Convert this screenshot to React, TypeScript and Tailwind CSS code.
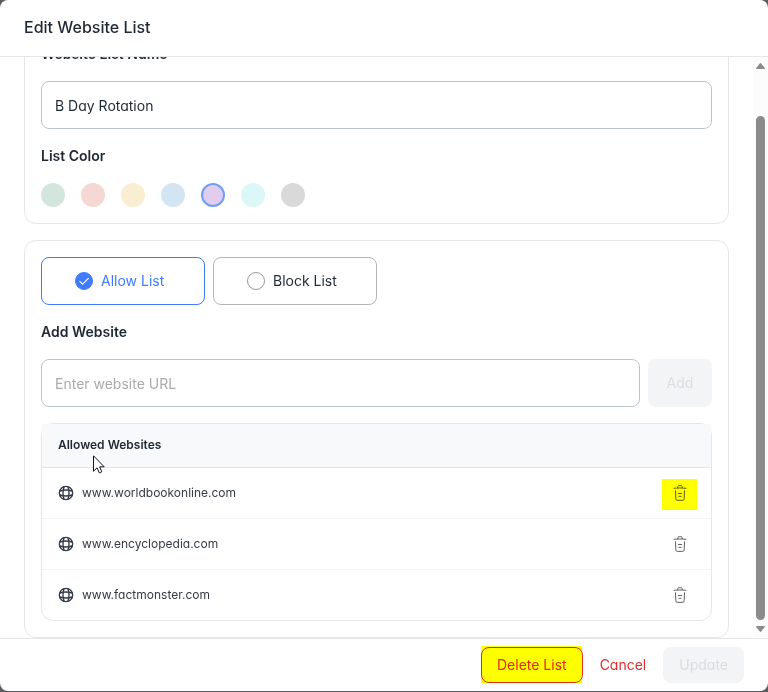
import { useState } from "react";
import clsx from "clsx";

const COLORS = [
  { name: "Green", className: "bg-[#d3e6dd]" },
  { name: "Red", className: "bg-[#f5d7d3]" },
  { name: "Yellow", className: "bg-[#f9eed2]" },
  { name: "Blue", className: "bg-[#d3e4f3]" },
  { name: "Purple", className: "bg-[#e2cdee]" },
  { name: "Cyan", className: "bg-[#dbf7f8]" },
  { name: "Gray", className: "bg-[#d9d9d9]" },
];

const MODES = ["Allow List", "Block List"];

const WEBSITES = ["www.worldbookonline.com", "www.encyclopedia.com", "www.factmonster.com"];

const GlobeIcon = () => (
  <svg viewBox="0 0 24 24" className="size-4 shrink-0" fill="none" stroke="currentColor" strokeWidth="2" strokeLinecap="round" strokeLinejoin="round">
    <circle cx="12" cy="12" r="10" />
    <path d="M8 3h1a28.42 28.42 0 0 0 0 18H8M15 3a28.42 28.42 0 0 1 0 18" />
    <path d="M3 16v-1a28.42 28.42 0 0 0 18 0v1M3 9a28.42 28.42 0 0 1 18 0" />
  </svg>
);

const TrashIcon = () => (
  <svg viewBox="0 0 24 24" className="size-4" fill="none" stroke="currentColor" strokeWidth="1.5" strokeLinecap="round" strokeLinejoin="round">
    <path d="M21 5c-3.33-.33-6.68-.5-10.02-.5-1.98 0-3.96.1-5.94.3L3 5" />
    <path d="m8.5 4 .22-1.31C8.88 1.71 9 1 10.69 1h2.62c1.69 0 1.82.75 1.97 1.67L15.5 4" />
    <path d="m18.85 8.6-.65 11.07C18.09 22.3 18 23 15.21 23H8.79C6 23 5.91 22.3 5.8 19.67L5.15 8.6" />
    <path d="M10.33 17h3.33M9.5 12.8h5" />
  </svg>
);

const CursorIcon = () => (
  <svg viewBox="0 0 12 19" className="pointer-events-none absolute top-[31px] left-[51px] h-[19px] w-3" fill="#fff" stroke="#14141f" strokeWidth="1">
    <path d="M.5.8v15.4l3.6-3.4 2.2 5.1 2.5-1.1-2.2-5h4.6z" />
  </svg>
);

const Scrollbar = () => (
  <div className="flex w-[15px] shrink-0 flex-col items-center bg-[#fcfcfc] py-1.5 text-[#8b8b8b]">
    <svg viewBox="0 0 9 6" className="h-1.5 w-[9px]" fill="currentColor">
      <path d="M3.8.5q.7-.8 1.4 0L8.8 5q.4 1-.6 1H.8q-1 0-.6-1z" />
    </svg>
    <div className="mt-[47px] mb-1.5 w-[9px] flex-1 rounded-full bg-[#8b8b8b]" />
    <svg viewBox="0 0 9 6" className="h-1.5 w-[9px]" fill="currentColor">
      <path d="M3.8 5.5q.7.8 1.4 0L8.8 1q.4-1-.6-1H.8q-1 0-.6 1z" />
    </svg>
  </div>
);

export default function App() {
  const [name, setName] = useState("B Day Rotation");
  const [color, setColor] = useState("Purple");
  const [mode, setMode] = useState("Allow List");
  const [url, setUrl] = useState("");

  return (
    <div className="h-screen bg-[#5c5c5e] pb-px font-['Inter',sans-serif] text-sm text-[#1f2933] [font-feature-settings:'cv11']">
      <div role="dialog" aria-labelledby="dialog-title" className="flex h-full flex-col overflow-hidden rounded-lg bg-white">
        <header className="flex h-[57px] shrink-0 items-center border-b border-[#e5e7eb] px-6 pb-0.5">
          <h1 id="dialog-title" className="text-base leading-6 font-medium">
            Edit Website List
          </h1>
        </header>

        <div className="flex min-h-0 flex-1">
          {/* scrolled to the end, so the first card runs out under the header */}
          <main className="flex min-w-0 flex-1 flex-col justify-end gap-4 overflow-hidden px-6">
            <section className="rounded-xl border border-[#e5e7eb] p-4">
              <label htmlFor="list-name" className="mb-4 block leading-[22px] font-semibold">
                Website List Name
              </label>
              <input
                id="list-name"
                value={name}
                onChange={e => setName(e.target.value)}
                className="block h-12 w-full rounded-lg border border-[#bcc5cf] px-[13px] outline-none"
              />
              <h2 className="my-4 leading-[22px] font-semibold">List Color</h2>
              <div className="flex gap-4">
                {COLORS.map(c => (
                  <input
                    key={c.name}
                    type="radio"
                    name="color"
                    aria-label={c.name}
                    checked={color === c.name}
                    onChange={() => setColor(c.name)}
                    className={clsx("size-6 appearance-none rounded-full border-[#6f9dfb] checked:border-2", c.className)}
                  />
                ))}
              </div>
            </section>

            <section className="rounded-xl border border-[#e5e7eb] p-4">
              <div className="flex gap-2">
                {MODES.map(m => (
                  <label
                    key={m}
                    className={clsx(
                      "flex h-12 w-[164px] items-center gap-2 rounded-lg border pl-[33px]",
                      mode === m ? "border-[#407bff] text-[#407bff]" : "border-[#b5b5b5]",
                    )}
                  >
                    <span className="relative flex">
                      <input
                        type="radio"
                        name="mode"
                        checked={mode === m}
                        onChange={() => setMode(m)}
                        className="size-[18px] appearance-none rounded-full border border-[#9a9a9a] checked:border-[#407bff] checked:bg-[#407bff]"
                      />
                      {mode === m && (
                        <svg viewBox="0 0 18 18" className="pointer-events-none absolute inset-0" fill="none" stroke="#fff" strokeWidth="1.1" strokeLinecap="round" strokeLinejoin="round">
                          <path d="m4.8 9.3 2.8 2.8 5.8-5.8" />
                        </svg>
                      )}
                    </span>
                    {m}
                  </label>
                ))}
              </div>

              <label htmlFor="website-url" className="my-4 block leading-[22px] font-semibold">
                Add Website
              </label>
              <div className="flex gap-2">
                <input
                  id="website-url"
                  placeholder="Enter website URL"
                  value={url}
                  onChange={e => setUrl(e.target.value)}
                  className="h-12 min-w-0 flex-1 rounded-lg border border-[#bcc5cf] px-[13px] outline-none placeholder:text-[#a9abae]"
                />
                <button disabled className="h-12 w-16 rounded-lg bg-[#f3f4f6] text-[#dadee4]">
                  Add
                </button>
              </div>

              <div className="mt-4 rounded-xl border border-[#e5e7eb]">
                <h3 className="relative flex h-11 items-center border-b border-[#e5e7eb] bg-[#f8f9fb] px-4 pb-0.5 text-xs font-semibold">
                  Allowed Websites
                  <CursorIcon />
                </h3>
                <ul className="divide-y divide-[#f3f4f6] text-xs text-[#333b45]">
                  {WEBSITES.map((site, i) => (
                    <li key={site} className="box-content flex h-[50px] items-center gap-2 pr-[14px] pl-4">
                      <GlobeIcon />
                      <span className="flex-1">{site}</span>
                      <button aria-label={`Remove ${site}`} className="relative flex h-[31px] w-[35px] items-center justify-center text-[#5e5e5e]">
                        <TrashIcon />
                        {i === 0 && <span className="pointer-events-none absolute inset-x-0 top-px -bottom-px bg-[#ffff00] mix-blend-multiply" />}
                      </button>
                    </li>
                  ))}
                </ul>
              </div>
            </section>
          </main>
          <Scrollbar />
        </div>

        <footer className="flex shrink-0 justify-end border-t border-[#e5e7eb] px-6 py-2">
          <button className="relative h-9 rounded-lg border border-[#e02d2d] px-[15px] text-[#e02d2d]">
            Delete List
            <span className="pointer-events-none absolute -top-0.5 right-0 -bottom-px -left-px bg-[#ffff00] mix-blend-multiply" />
          </button>
          <button className="h-9 px-[17px] text-[#e02d2d]">Cancel</button>
          <button disabled className="h-9 rounded-lg bg-[#f3f4f6] px-4 text-[#dadee4]">
            Update
          </button>
        </footer>
      </div>
    </div>
  );
}
